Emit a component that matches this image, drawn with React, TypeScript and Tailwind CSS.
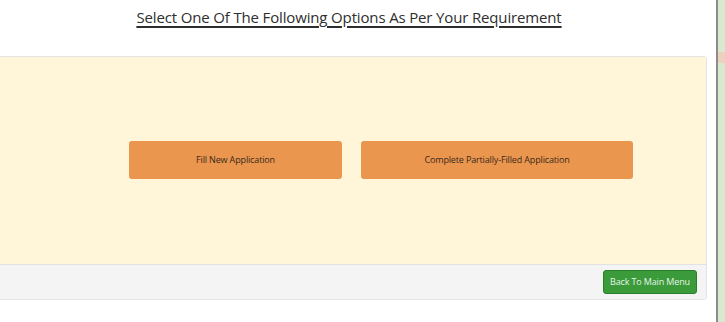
import React from 'react';

const OptionButton: React.FC<{ label: string; width: string }> = ({ label, width }) => (
  <button
    type="button"
    className={`${width} h-[38px] rounded-[3px] bg-[#ea964f] text-[9px] tracking-[-0.15px] text-[#3a2a1a]`}
  >
    {label}
  </button>
);

const App: React.FC = () => {
  return (
    <div className="w-full h-[322px] bg-white flex overflow-hidden font-['Open_Sans',sans-serif]">
      <div className="w-[716px] shrink-0 flex flex-col">
        <div className="h-[56px] flex justify-center pr-[18px] pt-[6px]">
          <h1 className="text-[15px] leading-[22px] font-medium text-[#2e2e2e] underline decoration-[1.5px] underline-offset-[3px] tracking-[-0.15px]">
            Select One Of The Following Options As Per Your Requirement
          </h1>
        </div>

        <div className="ml-[-4px] mr-[9px] border border-[#e4e4e4] rounded-[3px] flex flex-col">
          <div className="h-[207px] bg-[#fff6da] flex items-center pl-[132px] gap-[19px] pb-[2px]">
            <OptionButton label="Fill New Application" width="w-[213px]" />
            <OptionButton label="Complete Partially-Filled Application" width="w-[272px]" />
          </div>
          <div className="h-[35px] bg-[#f4f4f4] border-t border-[#e2e2e2] flex items-center justify-end pr-[9px]">
            <button
              type="button"
              className="h-[24px] w-[94px] rounded-[3px] bg-[#3b9b3b] border border-[#2a7f2a] text-[9px] tracking-[-0.15px] text-[#e6f4e6]"
            >
              Back To Main Menu
            </button>
          </div>
        </div>
      </div>

      <div className="w-[2px] shrink-0 bg-[#8c8c8c]" />
      <div className="flex-1 bg-[#d9e9cf] flex flex-col">
        <div className="h-[52px]" />
        <div className="h-[11px] bg-[#ecd2bd]" />
      </div>
    </div>
  );
};

export default App;
